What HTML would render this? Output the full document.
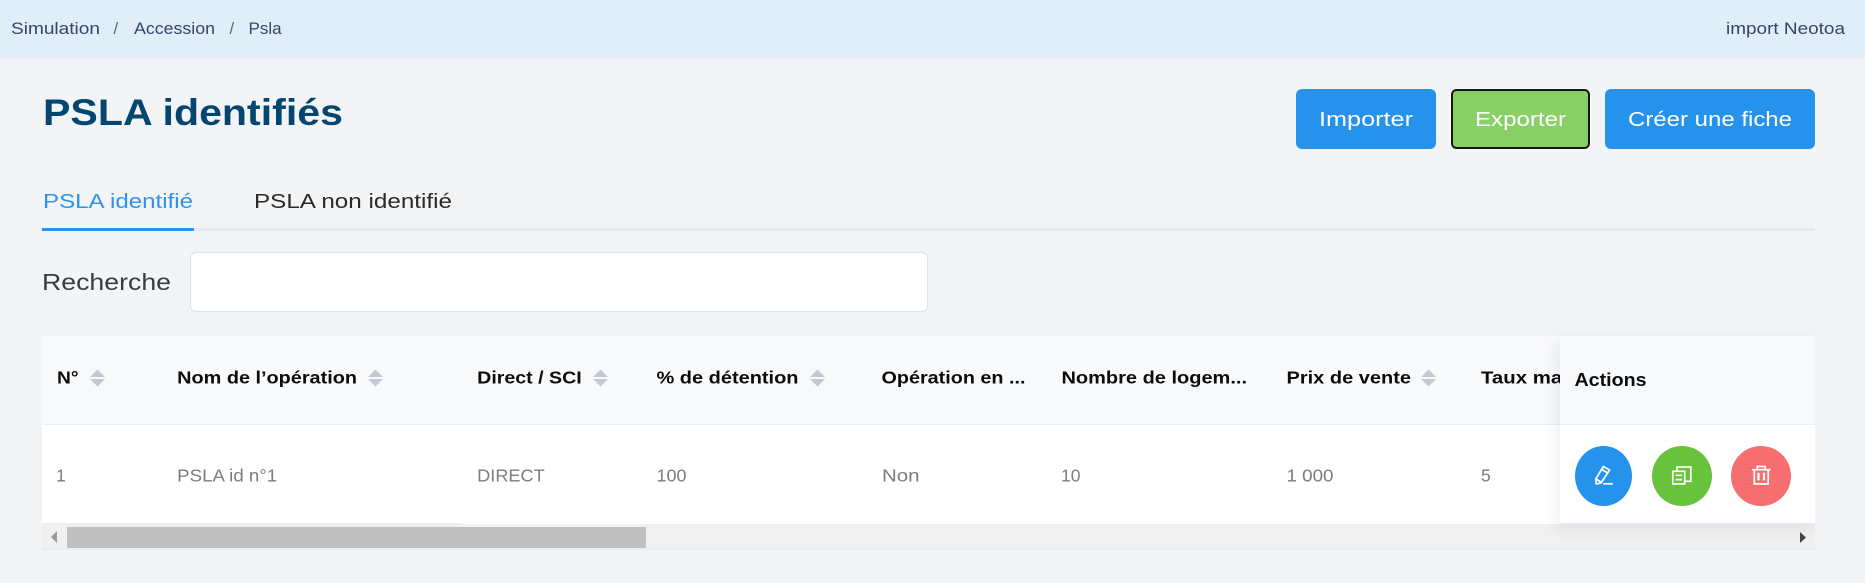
<!DOCTYPE html>
<html lang="fr"><head><meta charset="utf-8"><title>PSLA identifiés</title>
<style>
html,body{margin:0;padding:0;width:1865px;height:583px;overflow:hidden;background:#f3f4f6}
svg{position:absolute;left:0;top:0;display:block}
text{font-family:"Liberation Sans",sans-serif}
#panel{position:absolute;left:1560px;top:336px;width:255px;height:188px;background:#fff;box-shadow:-3px 5px 14px rgba(60,70,90,.09);clip-path:inset(-20px 0 -20px -20px)}
</style></head><body>
<svg width="1865" height="583" viewBox="0 0 1865 583" xmlns="http://www.w3.org/2000/svg">
<rect x="0" y="0" width="1865" height="58.5" fill="#e1edf9"/>
<g font-size="16.5" fill="#34466a">
<text x="11" y="34" textLength="89" lengthAdjust="spacingAndGlyphs">Simulation</text>
<text x="113.500" y="34" fill="#56657f">/</text>
<text x="134" y="34" textLength="81" lengthAdjust="spacingAndGlyphs">Accession</text>
<text x="229.500" y="34" fill="#56657f">/</text>
<text x="248.500" y="34" font-size="17">Psla</text>
<text x="1726" y="34" textLength="119" lengthAdjust="spacingAndGlyphs">import Neotoa</text>
</g>
<text x="43" y="125" font-size="37.500" font-weight="700" fill="#03466f" textLength="300" lengthAdjust="spacingAndGlyphs">PSLA identifiés</text>

<rect x="1296" y="89" width="140" height="60" rx="6" fill="#2592ec"/>
<rect x="1450" y="88.5" width="141" height="61" rx="6" fill="#fff"/>
<rect x="1452" y="90" width="137" height="58" rx="4.5" fill="#88d065" stroke="#151515" stroke-width="2"/>
<rect x="1605" y="89" width="210" height="60" rx="6" fill="#2592ec"/>
<g font-size="20" fill="#fff">
<text x="1319" y="126" textLength="94" lengthAdjust="spacingAndGlyphs">Importer</text>
<text x="1475" y="126" textLength="91" lengthAdjust="spacingAndGlyphs">Exporter</text>
<text x="1628" y="126" textLength="164" lengthAdjust="spacingAndGlyphs">Créer une fiche</text>
</g>

<text x="43" y="208" font-size="20" fill="#2f93ec" textLength="150" lengthAdjust="spacingAndGlyphs">PSLA identifié</text>
<text x="254" y="208" font-size="20" fill="#2a2a2a" textLength="198" lengthAdjust="spacingAndGlyphs">PSLA non identifié</text>
<rect x="42" y="228" width="1773" height="3" fill="#e6e7ee"/>
<rect x="42" y="228" width="152" height="3" fill="#2592ec"/>

<text x="42" y="290" font-size="23.500" fill="#383b42" textLength="129" lengthAdjust="spacingAndGlyphs">Recherche</text>
<rect x="190.500" y="252.500" width="737" height="59" rx="6" fill="#fff" stroke="#dde1e8"/>

<rect x="42" y="336" width="1773" height="88" fill="#f8f9fb"/>
<rect x="42" y="424" width="1773" height="1" fill="#eceef4"/>
<rect x="42" y="425" width="1773" height="99" fill="#fff"/>
<rect x="42" y="523" width="420" height="1" fill="#eceef3"/>
<rect x="42" y="524" width="1773" height="25" fill="#f0f0f1"/>
<rect x="42" y="549" width="1773" height="1" fill="#ebecef"/>
<rect x="67" y="527" width="579" height="21" fill="#c0c0c0"/>
<path d="M57 531v12l-6-6z" fill="#9a9a9a"/>

<g font-size="17.500" font-weight="700" fill="#0c0c0c">
<text x="57" y="383.500" textLength="21.500" lengthAdjust="spacingAndGlyphs">N°</text>
<text x="177.200" y="383.500" textLength="179.800" lengthAdjust="spacingAndGlyphs">Nom de l’opération</text>
<text x="477.200" y="383.500" textLength="104.500" lengthAdjust="spacingAndGlyphs">Direct / SCI</text>
<text x="656.500" y="383.500" textLength="142" lengthAdjust="spacingAndGlyphs">% de détention</text>
<text x="881.500" y="383.500" textLength="144" lengthAdjust="spacingAndGlyphs">Opération en ...</text>
<text x="1061.500" y="383.500" textLength="185.500" lengthAdjust="spacingAndGlyphs">Nombre de logem...</text>
<text x="1286.500" y="383.500" textLength="124.500" lengthAdjust="spacingAndGlyphs">Prix de vente</text>
<text x="1481" y="383.500" textLength="92.500" lengthAdjust="spacingAndGlyphs">Taux max</text>
</g>
<g fill="#c3c8d1">
<path d="M90 377l7.500-7.500 7.500 7.500zM90 379l7.500 7.500 7.500-7.500z"/>
<path d="M368 377l7.500-7.500 7.500 7.500zM368 379l7.500 7.500 7.500-7.500z"/>
<path d="M593 377l7.500-7.500 7.500 7.500zM593 379l7.500 7.500 7.500-7.500z"/>
<path d="M810 377l7.500-7.500 7.500 7.500zM810 379l7.500 7.500 7.500-7.500z"/>
<path d="M1421 377l7.500-7.500 7.500 7.500zM1421 379l7.500 7.500 7.500-7.500z"/>
</g>
<g font-size="17.500" fill="#7c7c7c">
<text x="56" y="481.500">1</text>
<text x="177.200" y="481.500" textLength="100" lengthAdjust="spacingAndGlyphs">PSLA id n°1</text>
<text x="477.200" y="481.500" textLength="67.500" lengthAdjust="spacingAndGlyphs">DIRECT</text>
<text x="656.500" y="481.500" textLength="30" lengthAdjust="spacingAndGlyphs">100</text>
<text x="882" y="481.500" textLength="37.500" lengthAdjust="spacingAndGlyphs">Non</text>
<text x="1061" y="481.500">10</text>
<text x="1286.500" y="481.500" textLength="47" lengthAdjust="spacingAndGlyphs">1 000</text>
<text x="1481" y="481.500">5</text>
</g>
</svg>

<div id="panel"></div>

<svg width="1865" height="583" viewBox="0 0 1865 583" xmlns="http://www.w3.org/2000/svg">
<rect x="1560" y="336" width="255" height="88" fill="#f8f9fb"/>
<rect x="1560" y="424" width="255" height="1" fill="#eceef4"/>
<rect x="1560" y="523" width="255" height="1" fill="#e6e9ef"/>
<text x="1574.500" y="386" font-size="18" font-weight="700" fill="#0c0c0c" textLength="72" lengthAdjust="spacingAndGlyphs">Actions</text>
<path d="M1800 532v11l6-5.500z" fill="#444"/>

<ellipse cx="1603.500" cy="476" rx="28.500" ry="30" fill="#2592ec"/>
<circle cx="1682" cy="476" r="30" fill="#69c23b"/>
<circle cx="1761" cy="476" r="30" fill="#f76e70"/>

<g fill="none" stroke="#fff" stroke-width="1.700">
<path d="M1603.300 466.500l6.300 3.500-8.600 13-4.700.9-.5-5z"/>
<path d="M1601.600 469.300l5.800 3.600"/>
<path d="M1595.900 478.700l4.800 3.300"/>
<path d="M1603.300 483.800h9.400"/>
<path d="M1672.800 471.300h11.900v12.600h-11.900z"/>
<path d="M1677 471v-4h13.800v14.300h-5.800"/>
<path d="M1675.600 475.300h6.400M1675.600 479.600h6.400"/>
<path d="M1752 469.700h18.700"/>
<path d="M1757.200 469.500v-3h8v3"/>
<path d="M1754.300 470v13.900h13.900v-13.900"/>
</g>
<path d="M1758.500 472.700v7.500M1764 472.700v7.500" stroke="#fff" stroke-width="2.200" fill="none"/>
</svg>
</body></html>
